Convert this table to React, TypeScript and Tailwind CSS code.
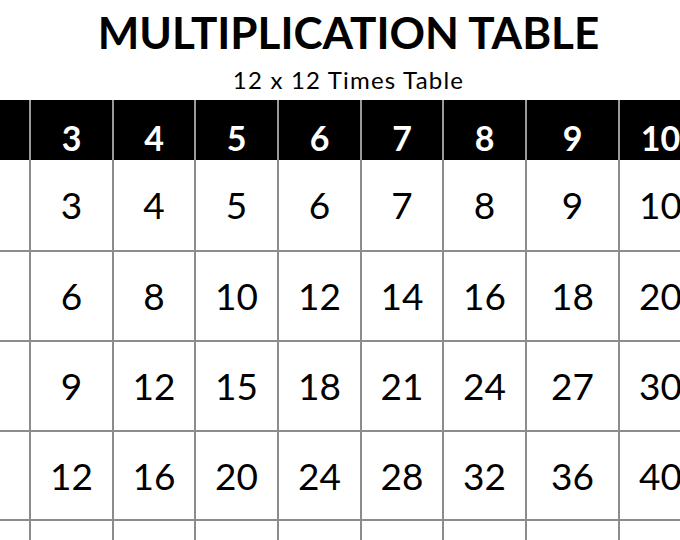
import React from "react";

const cols = [2, 3, 4, 5, 6, 7, 8, 9, 10];
const widths = ["w-[83px]", "w-[83px]", "w-[82px]", "w-[83px]", "w-[83px]", "w-[82px]", "w-[83px]", "w-[93px]", "w-[83px]"];
const rows = [1, 2, 3, 4, 5];
const rowH = ["h-[92px]", "h-[90px]", "h-[90px]", "h-[89px]", "h-[90px]"];

export default function App() {
  return (
    <div className="w-[680px] h-[540px] overflow-hidden bg-white" style={{ fontFamily: "Lato, 'Open Sans', sans-serif" }}>
      <div className="flex flex-col items-center pl-[17px] pt-[7px] h-[100px]">
        <div className="text-[44px] leading-[50px] font-bold text-black">MULTIPLICATION TABLE</div>
        <div className="text-[24px] leading-[30px] tracking-[1.2px] text-black mt-[8px]">12 x 12 Times Table</div>
      </div>
      <div className="ml-[-52px] flex flex-col">
        <div className="flex h-[60px] bg-black">
          {cols.map((c, i) => (
            <div key={c} className={`${widths[i]} shrink-0 h-full border-r-2 border-[#9a9a9a] flex items-center justify-center pt-[14px] text-white text-[34px] font-bold`}>
              {i === 0 ? "" : c}
            </div>
          ))}
        </div>
        {rows.map((r, ri) => (
          <div key={r} className={`flex ${rowH[ri]} shrink-0`}>
            {cols.map((c, i) => (
              <div key={c} className={`${widths[i]} shrink-0 h-full border-r-2 border-b-2 border-[#8c8c8c] flex items-center justify-center text-black text-[37px]`}>
                {i === 0 ? "" : r * c}
              </div>
            ))}
          </div>
        ))}
      </div>
    </div>
  );
}
